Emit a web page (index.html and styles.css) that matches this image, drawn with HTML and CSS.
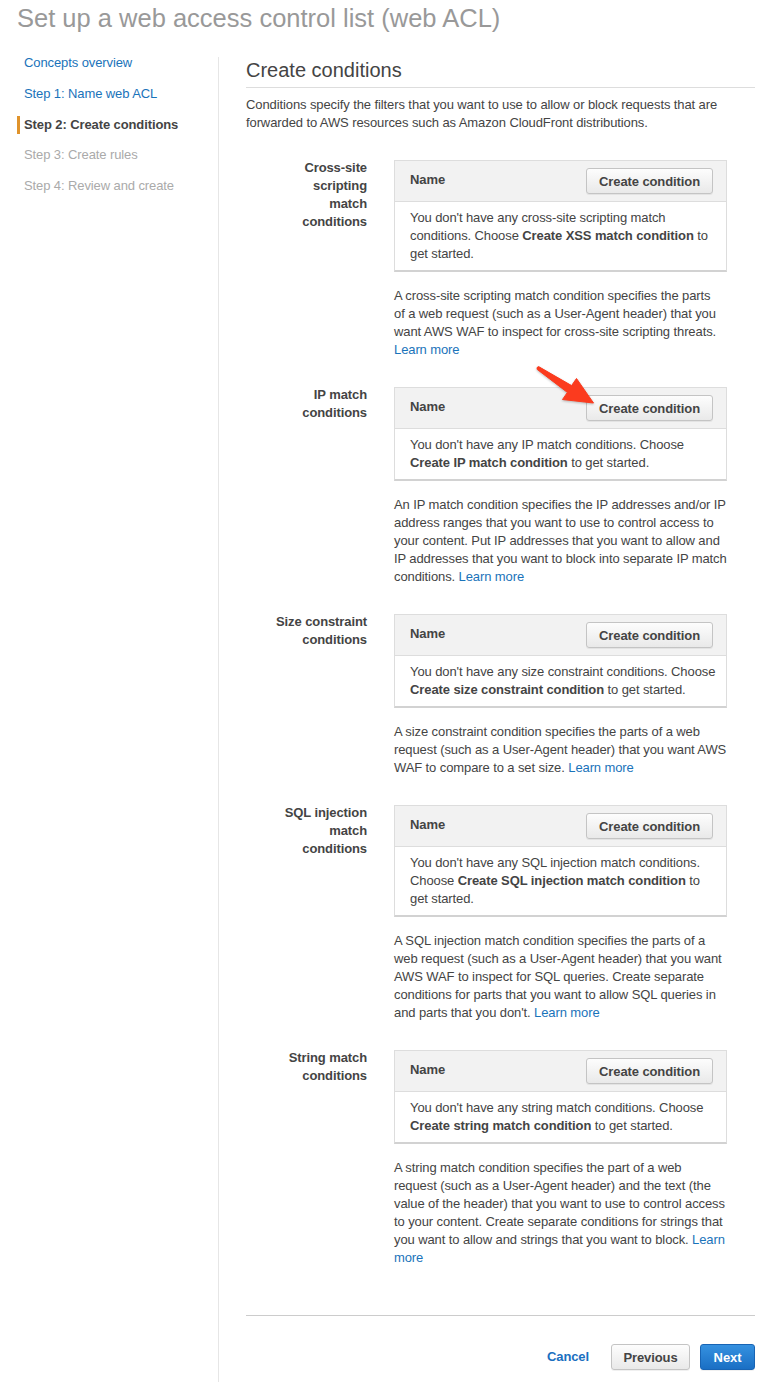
FILE: index.html
```html
<!DOCTYPE html>
<html lang="en">
<head>
<meta charset="utf-8">
<title>Set up a web access control list (web ACL)</title>
<link rel="stylesheet" href="styles.css">
</head>
<body>
<h1 class="page-title">Set up a web access control list (web ACL)</h1>
<div class="layout">
  <nav class="sidebar">
    <a class="nav-item nav-link" href="#">Concepts overview</a>
    <a class="nav-item nav-link" href="#">Step 1: Name web ACL</a>
    <span class="nav-item nav-active">Step 2: Create conditions</span>
    <span class="nav-item nav-disabled">Step 3: Create rules</span>
    <span class="nav-item nav-disabled">Step 4: Review and create</span>
  </nav>
  <main class="main">
    <h2 class="main-title">Create conditions</h2>
    <p class="intro">Conditions specify the filters that you want to use to allow or block requests that are forwarded to AWS resources such as Amazon CloudFront distributions.</p>

    <section class="cond">
      <div class="cond-label">Cross-site scripting match conditions</div>
      <div class="cond-box">
        <div class="cond-head"><span class="cond-name">Name</span><button class="btn">Create condition</button></div>
        <div class="cond-body">You don't have any cross-site scripting match conditions. Choose <b>Create XSS match condition</b> to get started.</div>
      </div>
      <p class="cond-desc cond-desc-tight">A cross-site scripting match condition specifies the parts of a web request (such as a User-Agent header) that you want AWS WAF to inspect for cross-site scripting threats. <a href="#" class="link">Learn more</a></p>
    </section>

    <section class="cond">
      <div class="cond-label">IP match conditions</div>
      <div class="cond-box">
        <div class="cond-head"><span class="cond-name">Name</span><button class="btn">Create condition</button></div>
        <div class="cond-body">You don't have any IP match conditions. Choose <b>Create IP match condition</b> to get started.</div>
        <svg class="arrow" width="70" height="48" viewBox="0 0 70 48" aria-hidden="true">
          <path d="M7.6 5.6 L40.6 24.6 L45.5 17.5 L62.5 42 L31.5 38.5 L36.4 31.4 L6.2 8.4 Q5.2 6.2 7.6 5.6 Z" fill="#fb3b1e" stroke="#fb3b1e" stroke-width="1" stroke-linejoin="round"/>
        </svg>
      </div>
      <p class="cond-desc">An IP match condition specifies the IP addresses and/or IP address ranges that you want to use to control access to your content. Put IP addresses that you want to allow and IP addresses that you want to block into separate IP match conditions. <a href="#" class="link">Learn more</a></p>
    </section>

    <section class="cond">
      <div class="cond-label">Size constraint conditions</div>
      <div class="cond-box">
        <div class="cond-head"><span class="cond-name">Name</span><button class="btn">Create condition</button></div>
        <div class="cond-body">You don't have any size constraint conditions. Choose <b>Create size constraint condition</b> to get started.</div>
      </div>
      <p class="cond-desc">A size constraint condition specifies the parts of a web request (such as a User-Agent header) that you want AWS WAF to compare to a set size. <a href="#" class="link">Learn more</a></p>
    </section>

    <section class="cond">
      <div class="cond-label">SQL injection match conditions</div>
      <div class="cond-box">
        <div class="cond-head"><span class="cond-name">Name</span><button class="btn">Create condition</button></div>
        <div class="cond-body">You don't have any SQL injection match conditions. Choose <b>Create SQL injection match condition</b> to get started.</div>
      </div>
      <p class="cond-desc">A SQL injection match condition specifies the parts of a web request (such as a User-Agent header) that you want AWS WAF to inspect for SQL queries. Create separate conditions for parts that you want to allow SQL queries in and parts that you don't. <a href="#" class="link">Learn more</a></p>
    </section>

    <section class="cond cond-last">
      <div class="cond-label">String match conditions</div>
      <div class="cond-box">
        <div class="cond-head"><span class="cond-name">Name</span><button class="btn">Create condition</button></div>
        <div class="cond-body">You don't have any string match conditions. Choose <b>Create string match condition</b> to get started.</div>
      </div>
      <p class="cond-desc">A string match condition specifies the part of a web request (such as a User-Agent header) and the text (the value of the header) that you want to use to control access to your content. Create separate conditions for strings that you want to allow and strings that you want to block. <a href="#" class="link">Learn more</a></p>
    </section>

    <div class="footer">
      <a href="#" class="cancel">Cancel</a>
      <button class="btn btn-prev">Previous</button>
      <button class="btn btn-next">Next</button>
    </div>
  </main>
</div>
</body>
</html>
```

FILE: styles.css
```css
html, body {
  margin: 0;
  padding: 0;
  background: #fff;
}
body {
  font-family: "Liberation Sans", Arial, Helvetica, sans-serif;
  font-size: 13px;
  line-height: 18px;
  letter-spacing: -0.1px;
  color: #444;
}
.page-title {
  margin: 0;
  padding: 2px 0 0 17px;
  font-size: 25.5px;
  line-height: 32px;
  letter-spacing: 0;
  font-weight: normal;
  color: #999;
}
.layout {
  display: flex;
  align-items: flex-start;
}
.sidebar {
  width: 218px;
  flex: none;
  box-sizing: border-box;
  padding: 20px 0 0 17px;
  display: flex;
  flex-direction: column;
  gap: 12.8px;
}
.nav-item {
  display: block;
  padding-left: 7px;
  text-decoration: none;
  white-space: nowrap;
}
.nav-link { color: #1a73ba; }
.nav-active {
  font-weight: bold;
  color: #444;
  border-left: 3px solid #e0932b;
  padding-left: 4px;
}
.nav-disabled { color: #aaa; }

.main {
  flex: 1;
  margin: 23px 13px 0 0;
  padding: 0 0 14px 27px;
  border-left: 1px solid #e6e6e6;
}
.main-title {
  margin: 0;
  font-size: 20px;
  line-height: 26px;
  letter-spacing: 0;
  font-weight: normal;
  color: #444;
  padding-bottom: 4px;
  border-bottom: 1px solid #ddd;
}
.intro {
  margin: 8px 0 28px;
}
.cond {
  display: grid;
  grid-template-columns: 121px 333px;
  column-gap: 27px;
  margin-bottom: 28px;
}
.cond-last { margin-bottom: 0; }
.cond-label {
  grid-column: 1;
  grid-row: 1 / span 2;
  justify-self: end;
  width: 94px;
  text-align: right;
  font-weight: bold;
  color: #444;
  margin-top: -1px;
}
.cond-box {
  grid-column: 2;
  grid-row: 1;
  position: relative;
  border: 1px solid #ddd;
  border-bottom: 2px solid #d2d2d2;
  background: #fff;
}
.cond-head {
  height: 40px;
  display: flex;
  align-items: center;
  justify-content: space-between;
  padding: 0 13px 0 15px;
  background: #f2f2f2;
  border-bottom: 1px solid #ddd;
}
.cond-name {
  font-weight: bold;
  color: #444;
  margin-top: -2px;
}
.cond-body {
  padding: 7px 10px 7px 15px;
}
.cond-desc {
  grid-column: 2;
  grid-row: 2;
  margin: 15px 0 0;
}
.cond-desc-tight {
  padding-right: 4px;
}
.link {
  color: #1a73ba;
  text-decoration: none;
}
.btn {
  height: 26px;
  padding: 0;
  font-family: inherit;
  font-size: 13px;
  letter-spacing: -0.1px;
  font-weight: bold;
  white-space: nowrap;
  color: #444;
  background: linear-gradient(#fdfdfd, #e9e9e9);
  border: 1px solid #c4c4c4;
  border-radius: 3px;
  box-shadow: 0 1px 0 rgba(0,0,0,0.06);
  cursor: pointer;
}
.cond-head .btn {
  width: 127px;
}
.arrow {
  position: absolute;
  left: 136px;
  top: -27px;
  filter: drop-shadow(0 1px 1px rgba(0,0,0,0.25));
}
.footer {
  margin-top: 48px;
  border-top: 1px solid #ccc;
  padding-top: 28px;
  display: flex;
  justify-content: flex-end;
  align-items: center;
}
.cancel {
  color: #1a6fc0;
  font-weight: bold;
  text-decoration: none;
  margin-right: 22px;
}
.btn-prev {
  width: 79px;
  margin-right: 10px;
}
.btn-next {
  width: 55px;
  color: #fff;
  background: linear-gradient(#3591e0, #1a6fc4);
  border-color: #1864b4;
}
```
